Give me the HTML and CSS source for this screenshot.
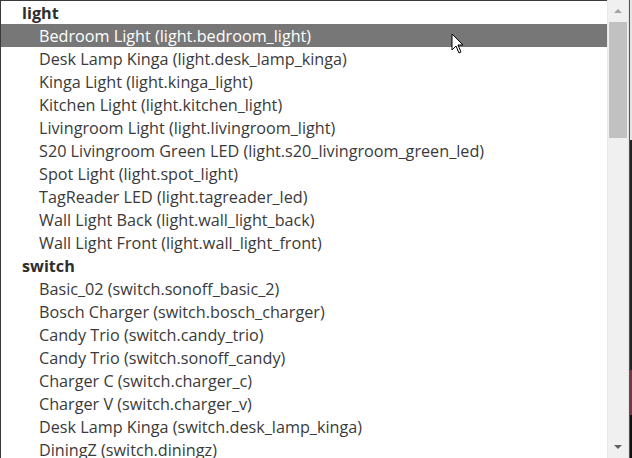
FILE: index.html
```html
<!DOCTYPE html>
<html>
<head>
<meta charset="utf-8">
<link rel="stylesheet" href="styles.css">
</head>
<body>
<div class="window">
  <div class="list">
    <div class="group">light</div>
    <div class="option selected">Bedroom Light (light.bedroom_light)</div>
    <div class="option">Desk Lamp Kinga (light.desk_lamp_kinga)</div>
    <div class="option">Kinga Light (light.kinga_light)</div>
    <div class="option">Kitchen Light (light.kitchen_light)</div>
    <div class="option">Livingroom Light (light.livingroom_light)</div>
    <div class="option">S20 Livingroom Green LED (light.s20_livingroom_green_led)</div>
    <div class="option">Spot Light (light.spot_light)</div>
    <div class="option">TagReader LED (light.tagreader_led)</div>
    <div class="option">Wall Light Back (light.wall_light_back)</div>
    <div class="option">Wall Light Front (light.wall_light_front)</div>
    <div class="group">switch</div>
    <div class="option">Basic_02 (switch.sonoff_basic_2)</div>
    <div class="option">Bosch Charger (switch.bosch_charger)</div>
    <div class="option">Candy Trio (switch.candy_trio)</div>
    <div class="option">Candy Trio (switch.sonoff_candy)</div>
    <div class="option">Charger C (switch.charger_c)</div>
    <div class="option">Charger V (switch.charger_v)</div>
    <div class="option">Desk Lamp Kinga (switch.desk_lamp_kinga)</div>
    <div class="option">DiningZ (switch.diningz)</div>
  </div>
  <div class="scrollbar">
    <div class="arrow up"></div>
    <div class="thumb"></div>
    <div class="track"></div>
    <div class="arrow down"></div>
  </div>
  <div class="edge"></div>
  <svg class="cursor" width="14" height="22" viewBox="0 0 14 22">
    <path d="M1 1 L1 17 L5 13 L8 20 L10 19 L7 12 L12 12 Z" fill="#fff" stroke="#000" stroke-width="1" stroke-linejoin="round"/>
  </svg>
</div>
</body>
</html>
```
FILE: styles.css
```css
html, body {
  margin: 0;
  padding: 0;
  background: #fff;
}
.window {
  position: relative;
  display: flex;
  width: 632px;
  height: 458px;
  overflow: hidden;
  font-family: "Open Sans", "Noto Sans", sans-serif;
  font-size: 16.2px;
  color: #333;
}
.list {
  flex: 1;
  border-top: 1px solid #3a3a3a;
  border-left: 1px solid #3a3a3a;
  background: #fff;
  overflow: hidden;
}
.group {
  height: 22px;
  padding-top: 1px;
  line-height: 22px;
  padding-left: 21px;
  font-weight: 700;
  color: #2e2e2e;
}
.option {
  height: 22px;
  padding-top: 1px;
  line-height: 22px;
  padding-left: 38px;
  white-space: nowrap;
  color: #3a3a3a;
}
.option.selected {
  background: #777;
  color: #fff;
}
.scrollbar {
  width: 20px;
  display: flex;
  flex-direction: column;
  background: #f0f0f0;
  border-left: 1px solid #e8e8e8;
  border-right: 1px solid #e4e4e4;
}
.arrow {
  height: 22px;
  display: flex;
  align-items: center;
  justify-content: center;
}
.arrow::before {
  content: "";
  width: 0;
  height: 0;
  border-left: 4px solid transparent;
  border-right: 4px solid transparent;
}
.arrow.up::before {
  border-bottom: 4px solid #a3a3a3;
}
.arrow.down::before {
  border-top: 4px solid #606060;
}
.thumb {
  height: 116px;
  margin: 0 1px;
  background: #c1c1c1;
}
.track {
  flex: 1;
}
.edge {
  width: 2px;
  background: linear-gradient(to bottom, #e6e6e6 0, #e6e6e6 140px, #222 140px, #222 370px, #7a3444 370px, #7a3444 415px, #111 415px);
  border-left: 1px solid #555;
}
.cursor {
  position: absolute;
  left: 451px;
  top: 33px;
}
```
